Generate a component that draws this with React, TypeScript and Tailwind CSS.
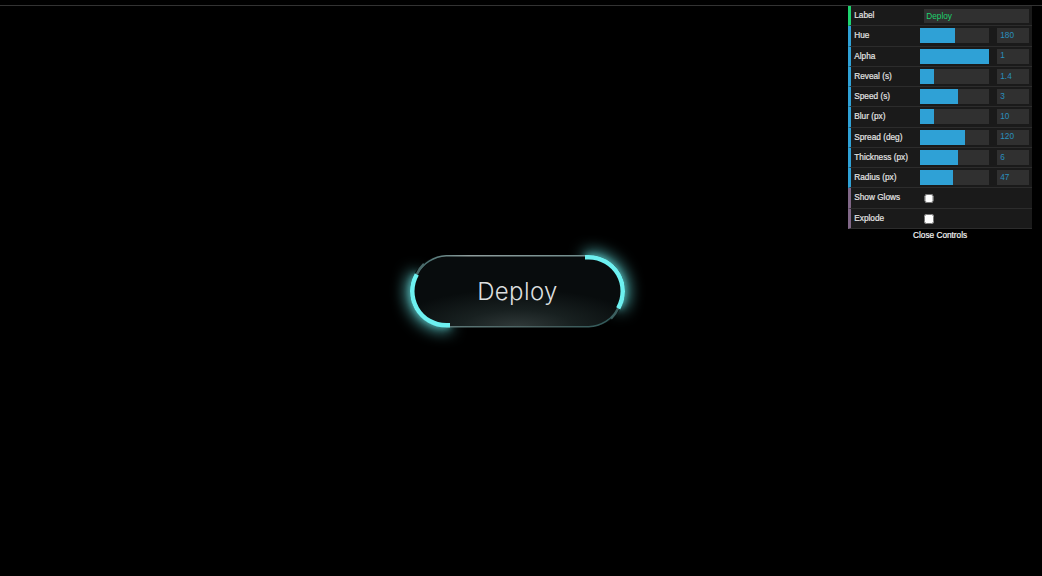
const sliders = [
  { label: 'Hue', value: '180', pct: 50 },
  { label: 'Alpha', value: '1', pct: 100 },
  { label: 'Reveal (s)', value: '1.4', pct: 20 },
  { label: 'Speed (s)', value: '3', pct: 55 },
  { label: 'Blur (px)', value: '10', pct: 20 },
  { label: 'Spread (deg)', value: '120', pct: 65 },
  { label: 'Thickness (px)', value: '6', pct: 55 },
  { label: 'Radius (px)', value: '47', pct: 48 },
];

const textClass = 'pt-[1.5px] pl-[3px] text-[8.25px] text-[#e4e4e4] [-webkit-text-stroke:0.2px_#e4e4e4] [text-shadow:0_-1px_0_#111]';
const rowClass = 'flex h-[20.25px] items-center border-b border-[#2c2c2c] border-l-[3px] bg-[#1a1a1a] pr-[2px]';

function Arcs({ className, width = 4.5 }: { className?: string; width?: number }) {
  return (
    <svg viewBox="0 0 215 72.5" className={className} fill="none" stroke="#6df1f1" strokeWidth={width}>
      <path d="M175 2.25 H178.75 A34 34 0 0 1 208.2 53.25" />
      <path d="M40 70.25 H36.25 A34 34 0 0 1 6.8 19.25" />
    </svg>
  );
}

function GlowButton() {
  return (
    <div className="relative mr-[7px] h-[72.5px] w-[215px]">
      <Arcs className="absolute inset-0 overflow-visible blur-[8px]" width={9} />
      <Arcs className="absolute inset-0 overflow-visible opacity-60 blur-[3px]" width={5} />
      <button className="absolute inset-0 flex items-center justify-center rounded-[36.25px] bg-[radial-gradient(ellipse_125px_38px_at_50%_100%,#303939_0%,#182020_45%,#080c0d_100%)] pt-px font-['Inter',sans-serif] text-[24px] font-light tracking-[0.4px] text-[#dcdfdf]">
        Deploy
      </button>
      <svg viewBox="0 0 215 72.5" className="absolute inset-0 overflow-visible" fill="none" strokeWidth="1.4">
        <defs>
          <linearGradient id="edge" x1="0" y1="0" x2="1" y2="0">
            <stop offset="0" stopColor="#3f6b6b" />
            <stop offset="0.3" stopColor="#8f9d9d" />
            <stop offset="1" stopColor="#6f8c8c" />
          </linearGradient>
          <linearGradient id="edgeLow" x1="0" y1="0" x2="1" y2="0">
            <stop offset="0" stopColor="#5f7a7a" />
            <stop offset="0.6" stopColor="#465c5c" />
            <stop offset="1" stopColor="#2f5c5c" />
          </linearGradient>
        </defs>
        <path stroke="url(#edge)" d="M6.8 19.25 A35.5 35.5 0 0 1 36.25 0.8 H178.75" />
        <path stroke="url(#edgeLow)" d="M36.25 71.7 H178.75 A35.5 35.5 0 0 0 208.2 53.25" />
        <path stroke="#4a6a6a" strokeWidth="2.5" d="M6.8 19.25 A34 34 0 0 1 14 9" />
        <path stroke="#3c6060" strokeWidth="2.5" d="M208.2 53.25 A34 34 0 0 1 201 63.5" />
      </svg>
      <Arcs className="absolute inset-0 overflow-visible" />
    </div>
  );
}

function Controls() {
  return (
    <div className="absolute right-[10px] top-0 w-[183.75px] font-['Liberation_Sans',sans-serif]">
      <div className={`${rowClass} border-l-[#1ed36f]`}>
        <span className={`${textClass} w-[73px] shrink-0`}>Label</span>
        <input
          readOnly
          value="Deploy"
          className="h-[14.25px] w-[105px] bg-[#303030] pl-[2px] pt-px text-[8.25px] text-[#1ed36f] outline-none"
        />
      </div>
      {sliders.map((s) => (
        <div key={s.label} className={`${rowClass} border-l-[#2fa1d6]`}>
          <span className={`${textClass} w-[69px] shrink-0`}>{s.label}</span>
          <div className="h-[15px] w-[69px] shrink-0 bg-[#303030]">
            <div className="h-full bg-[#2fa1d6]" style={{ width: `${s.pct}%` }} />
          </div>
          <div className="ml-[8px] flex h-[15px] w-[32px] items-center bg-[#303030] pl-[3px] pt-px text-[8.25px] text-[#2a8fbe]">
            {s.value}
          </div>
        </div>
      ))}
      {['Show Glows', 'Explode'].map((label) => (
        <div key={label} className={`${rowClass} border-l-[#806787]`}>
          <span className={`${textClass} w-[73px] shrink-0`}>{label}</span>
          <input type="checkbox" className="m-0 mt-px h-[9.75px] w-[9.75px]" />
        </div>
      ))}
      <div className="flex h-[15px] items-center justify-center text-[8.25px] text-[#f4f4f4] [-webkit-text-stroke:0.2px_#f4f4f4]">
        Close Controls
      </div>
    </div>
  );
}

export default function App() {
  return (
    <div className="flex h-screen flex-col bg-black">
      <div className="h-[6px] shrink-0 border-b border-[#333333]" />
      <div className="relative flex flex-1 items-center justify-center">
        <GlowButton />
        <Controls />
      </div>
    </div>
  );
}
